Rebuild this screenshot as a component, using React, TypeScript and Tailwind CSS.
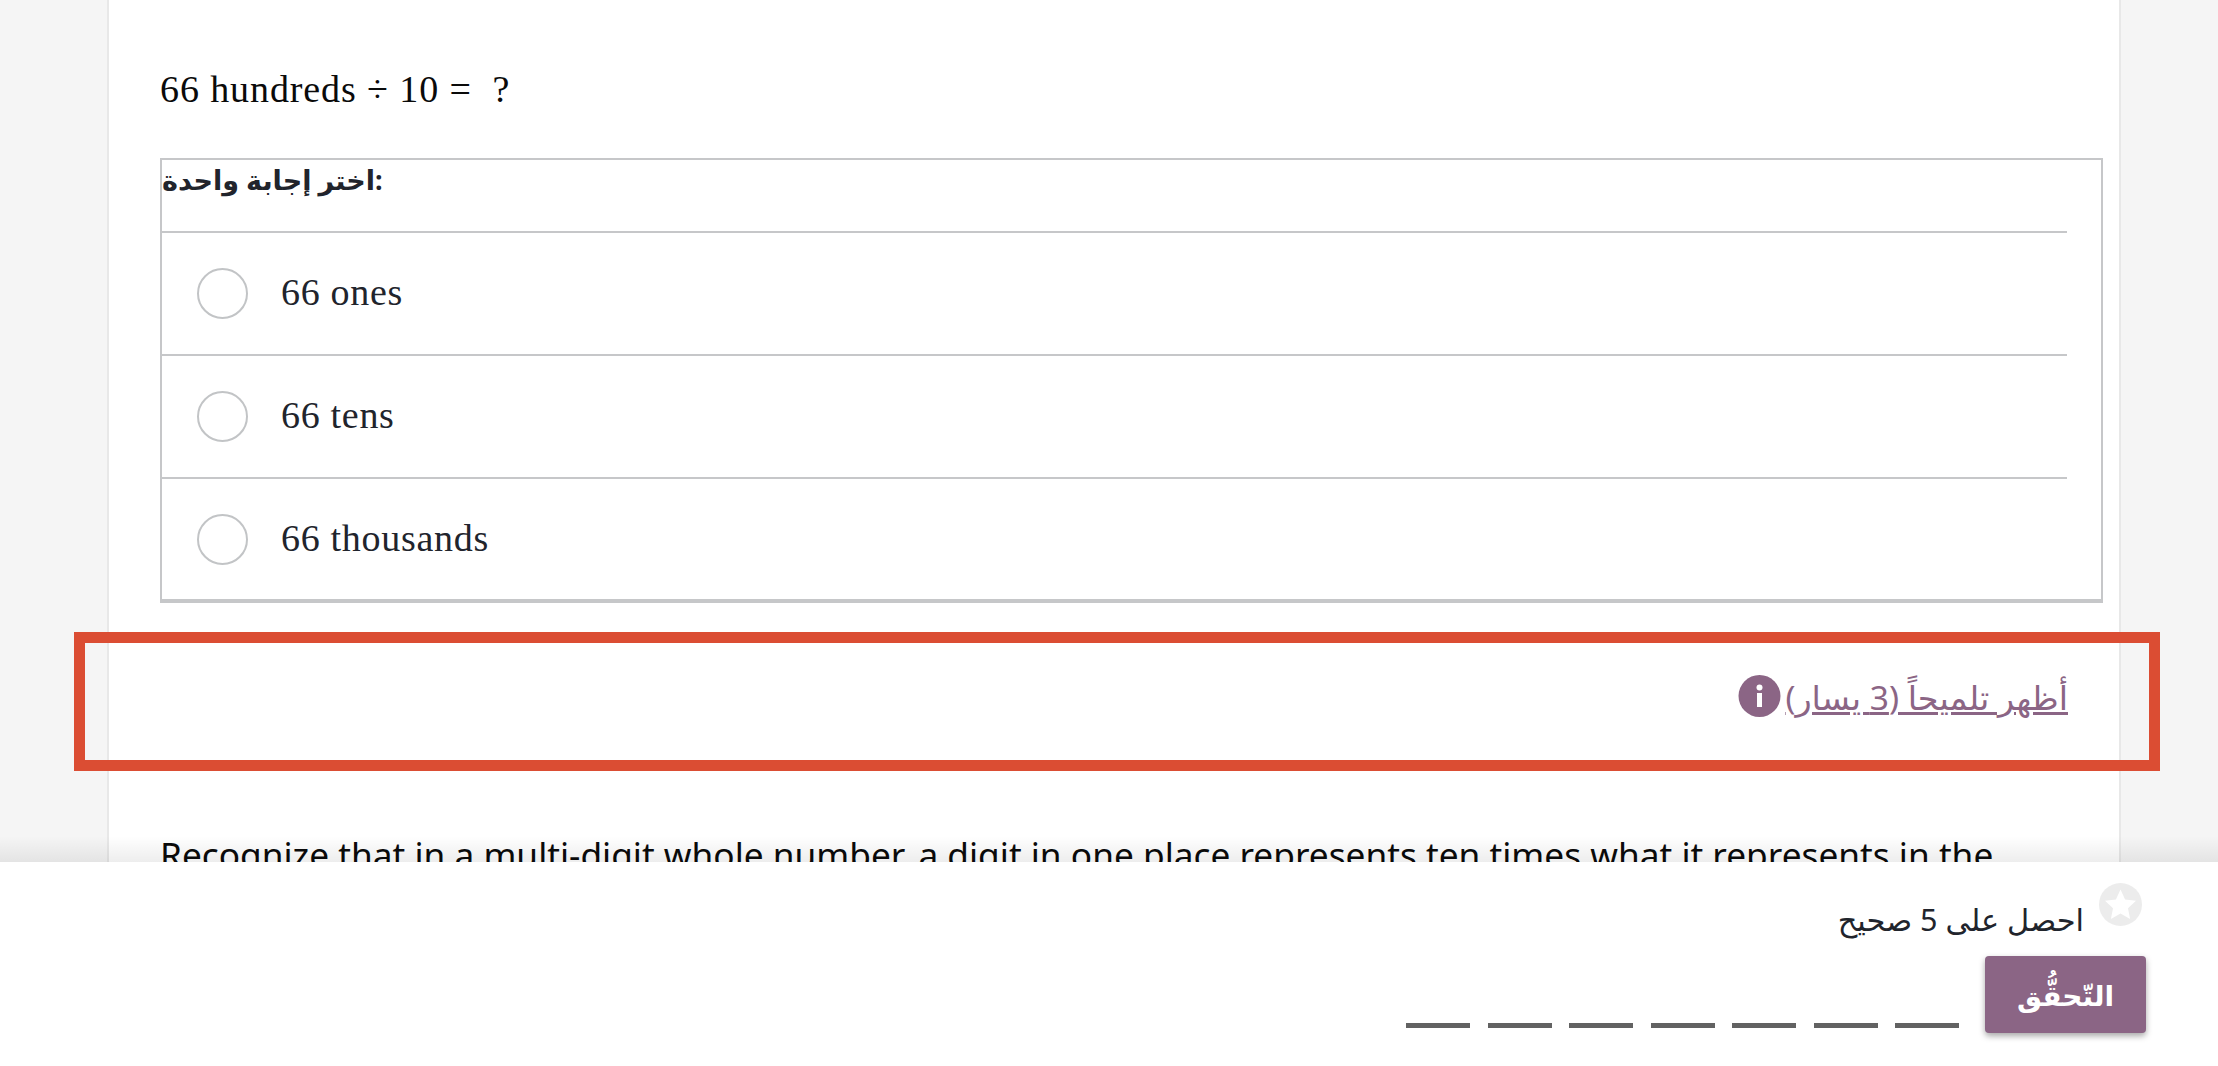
const SANS = "font-['Noto_Sans','Open_Sans','DejaVu_Sans',sans-serif]";

const CHOICES = ["66 ones", "66 tens", "66 thousands"];

function Choice({ label }: { label: string }) {
  return (
    <li className="flex h-[123px] items-center border-b-2 border-[#c6c7c9] pl-[35px]">
      <span className="h-[51px] w-[51px] rounded-full border-2 border-[#c2c4c6] bg-white" />
      <span className="ml-[33px] -translate-y-px font-['Liberation_Serif',serif] text-[38px] tracking-[0.7px] text-[#21242c]">{label}</span>
    </li>
  );
}

function InfoIcon() {
  return (
    <svg viewBox="0 0 42 42" className="h-[42px] w-[43px] shrink-0">
      <circle cx="21" cy="21" r="21" fill="#8b6585" />
      <circle cx="21" cy="12.5" r="3" fill="#fff" />
      <rect x="18.5" y="18" width="5" height="14" fill="#fff" />
    </svg>
  );
}

function StarBadge() {
  return (
    <svg viewBox="0 0 43 43" className="h-[43px] w-[43px]">
      <circle cx="21.5" cy="21.5" r="21.5" fill="#ececec" />
      <path d="M21.5 6.5l4.6 10 10.9 1.3-8 7.4 2.1 10.8-9.6-5.4-9.6 5.4 2.1-10.8-8-7.4 10.9-1.3z" fill="#fff" />
    </svg>
  );
}

export default function App() {
  return (
    <div className="relative flex h-screen w-full flex-col overflow-hidden bg-[#f5f5f5]">
      <main className="relative min-h-0 flex-1 overflow-hidden">
        <div className="ml-[107px] h-full w-[2014px] border-x-2 border-[#e8e8e8] bg-white pl-[51px] pr-[18px]">
          <p className="pt-[67px] font-['Liberation_Serif',serif] text-[38px] leading-[44px] tracking-[0.9px] text-[#0a0a0a]">
            66 hundreds ÷ 10 = &nbsp;?
          </p>

          <section className="mt-[47px] h-[445px] w-[1943px] border-2 border-b-4 border-[#c6c7c9] pr-[34px]">
            <h2 className={`${SANS} h-[71px] text-[27px] font-bold leading-[40px] text-[#21242c]`}>
              اختر إجابة واحدة:
            </h2>
            <ul className="border-t-2 border-[#c6c7c9]">
              {CHOICES.map((c) => (
                <Choice key={c} label={c} />
              ))}
            </ul>
          </section>

          <div dir="rtl" className="mt-[72px] flex items-center gap-[4px] pr-[33px]">
            <a className={`${SANS} translate-y-px text-[33.5px] leading-[42px] text-[#8b6585] underline`}>أظهر تلميحاً (3 يسار)</a>
            <InfoIcon />
          </div>

          <p className={`${SANS} mt-[115px] whitespace-nowrap text-[35.25px] leading-[44px] text-[#0a0a0a]`}>
            Recognize that in a multi-digit whole number, a digit in one place represents ten times what it represents in the
          </p>
        </div>

        {/* fade above the sticky footer */}
        <div className="absolute inset-x-0 bottom-0 h-[26px] bg-gradient-to-b from-transparent to-black/[0.07]" />
      </main>

      <footer className="relative h-[204px] shrink-0 bg-white pr-[72px]">
        <div className="flex justify-end pt-[21px]">
          <span className={`${SANS} mt-[16px] mr-[15px] text-[30.5px] leading-[40px] text-[#21242c]`}>احصل على 5 صحيح</span>
          <div className="mr-[4px]">
            <StarBadge />
          </div>
        </div>
        <div className="mt-[17px] flex items-end justify-end">
          <div className="mb-[5px] flex gap-[17.5px]">
            {[0, 1, 2, 3, 4, 5, 6].map((i) => (
              <span key={i} className="h-[5px] w-[64px] bg-[#626262]" />
            ))}
          </div>
          <button className={`${SANS} ml-[26px] h-[77px] w-[161px] rounded-[4px] bg-[#8b6585] text-[28px] font-bold text-white shadow-[0_3px_6px_rgba(0,0,0,0.35)]`}>
            التّحقُّق
          </button>
        </div>
      </footer>

      {/* annotation box drawn on top of the page */}
      <div className="absolute left-[74px] top-[632px] h-[139px] w-[2086px] border-[11px] border-[#db4d33]" />
    </div>
  );
}
